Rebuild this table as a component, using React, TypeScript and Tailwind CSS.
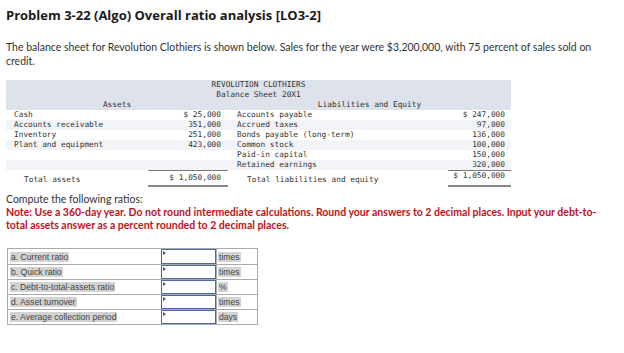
import React from 'react';

const rows = [
  { a: 'Cash', av: '$ 25,000', l: 'Accounts payable', lv: '$ 247,000' },
  { a: 'Accounts receivable', av: '351,000', l: 'Accrued taxes', lv: '97,000' },
  { a: 'Inventory', av: '251,000', l: 'Bonds payable (long-term)', lv: '136,000' },
  { a: 'Plant and equipment', av: '423,000', l: 'Common stock', lv: '100,000' },
  { a: '', av: '', l: 'Paid-in capital', lv: '150,000' },
  { a: '', av: '', l: 'Retained earnings', lv: '320,000' },
];

const ratios = [
  { label: 'a. Current ratio', unit: 'times' },
  { label: 'b. Quick ratio', unit: 'times' },
  { label: 'c. Debt-to-total-assets ratio', unit: '%' },
  { label: 'd. Asset turnover', unit: 'times' },
  { label: 'e. Average collection period', unit: 'days' },
];

export default function App() {
  return (
    <div className="w-[624px] h-[353px] bg-white px-[6px] pt-[7px] font-['Lato','Liberation_Sans',sans-serif] overflow-hidden">
      <h1 className="text-[13px] leading-[16px] font-bold text-[#1a1a1a] font-['Open_Sans','Liberation_Sans',sans-serif]">
        Problem 3-22 (Algo) Overall ratio analysis [LO3-2]
      </h1>
      <p className="mt-[17px] text-[10.5px] leading-[14px] text-[#333]">
        The balance sheet for Revolution Clothiers is shown below. Sales for the year were $3,200,000, with 75 percent of sales sold on credit.
      </p>

      <div className="mt-[12px] w-[505px] font-['DejaVu_Sans_Mono',monospace] text-[7.8px] leading-[10px] text-[#333]">
        <div className="bg-[#dee2eb] grid grid-cols-[222px_283px]">
          <div className="col-span-2 text-center">REVOLUTION CLOTHIERS</div>
          <div className="col-span-2 text-center">Balance Sheet 20X1</div>
          <div className="text-center">Assets</div>
          <div className="text-center">Liabilities and Equity</div>
        </div>
        {rows.map((r, i) => (
          <div key={i} className={`grid grid-cols-[142px_80px_220px_63px] h-[10px] ${i % 2 ? 'bg-[#f2f4f7]' : 'bg-white'}`}>
            <div className="pl-[8px]">{r.a}</div>
            <div className="text-right pr-[7px]">{r.av}</div>
            <div className="pl-[9px]">{r.l}</div>
            <div className={`text-right pr-[6px] ${i === 5 ? 'border-b border-[#777]' : ''}`}>{r.lv}</div>
          </div>
        ))}
        <div className="grid grid-cols-[142px_80px_220px_63px] h-[17px]">
          <div className="pl-[18px] pt-[5px]">Total assets</div>
          <div className="text-right pr-[7px] pt-[2px] border-t border-[#777] border-b-2 border-b-[#888]">$ 1,050,000</div>
          <div className="pl-[19px] pt-[5px]">Total liabilities and equity</div>
          <div className="text-right pr-[6px] pt-[1px] border-b-2 border-[#888]">$ 1,050,000</div>
        </div>
      </div>

      <p className="mt-[6px] text-[10.5px] leading-[13px] text-[#333]">Compute the following ratios:</p>
      <p className="text-[10.5px] leading-[13px] font-bold text-[#c0121b] pr-[8px]">
        Note: Use a 360-day year. Do not round intermediate calculations. Round your answers to 2 decimal places. Input your debt-to-total assets answer as a percent rounded to 2 decimal places.
      </p>

      <div className="mt-[16px] ml-[1px] w-[251px] border border-[#aaa] font-['Liberation_Sans',Arial,sans-serif] text-[8.6px] leading-[10px] text-[#444]">
        {ratios.map((r, i) => (
          <div key={i} className={`grid grid-cols-[153px_55px_43px] h-[15px] ${i ? 'border-t border-[#aaa]' : ''}`}>
            <div className="pl-[2px] flex items-center">
              <span className="bg-[#d3d3d3] px-[1px]">{r.label}</span>
            </div>
            <div className="relative border border-[#4a6a9c] bg-white">
              <span className="absolute left-[1px] top-[1px] w-0 h-0 border-t-[2px] border-t-transparent border-b-[2px] border-b-transparent border-l-[3px] border-l-[#3a5a8c]" />
            </div>
            <div className="pl-[1px] flex items-center border-l border-[#aaa]">
              <span className="bg-[#d3d3d3] px-[1px]">{r.unit}</span>
            </div>
          </div>
        ))}
      </div>
    </div>
  );
}
